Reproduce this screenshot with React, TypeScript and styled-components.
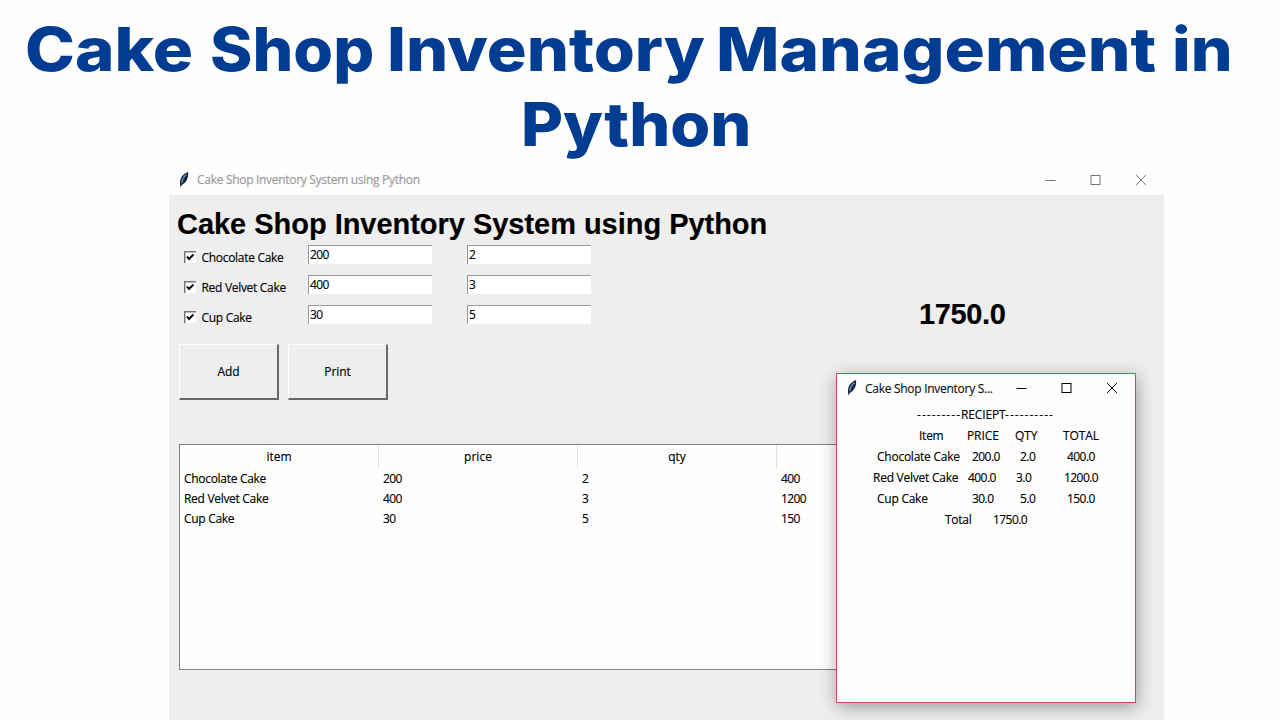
import React from 'react';
import styled, { createGlobalStyle } from 'styled-components';

const ui = `'Open Sans', 'Noto Sans', sans-serif`;

const GlobalStyle = createGlobalStyle`
  * { box-sizing: border-box; }
  body { margin: 0; background: #fefefe; overflow: hidden; }
`;

const Page = styled.main`
  width: 1280px;
  height: 720px;
  display: flex;
  flex-direction: column;
  overflow: hidden;
  font-family: ${ui};
  color: #000;
`;

const Banner = styled.h1`
  margin: 0;
  height: 165px;
  padding-top: 12px;
  font: 800 60px/75px Inter, sans-serif;
  color: #003d92;
`;

const BannerLine = styled.div<{ $indent: number }>`
  display: flex;
  padding-left: ${p => p.$indent}px;
  height: 75px;
`;

const Word = styled.span<{ $width: number; $stretch: number }>`
  display: block;
  flex: none;
  width: ${p => p.$width}px;
  white-space: nowrap;
  transform: scaleX(${p => p.$stretch});
  transform-origin: 0 50%;
`;

const AppWindow = styled.section`
  width: 995px;
  height: 555px;
  margin-left: 169px;
  position: relative;
  -webkit-text-stroke: 0.15px currentColor;
`;

const TitleBar = styled.header<{ $popup?: boolean }>`
  display: flex;
  align-items: center;
  height: ${p => (p.$popup ? 29 : 30)}px;
  padding-left: 9px;
  padding-bottom: 1px;
  background: #fefefe;
  color: ${p => (p.$popup ? '#111' : '#999')};
  font-size: 12px;
`;

const TitleText = styled.span<{ $spacing: number }>`
  flex: 1;
  margin-left: 7px;
  white-space: nowrap;
  letter-spacing: ${p => p.$spacing}px;
`;

const Controls = styled.div`
  display: flex;
  gap: 33px;
  padding-right: 17px;
  svg { display: block; }
`;

const Body = styled.div`
  height: 525px;
  background: #eee;
  padding: 12px 0 0 10px;
`;

const Heading = styled.h2`
  margin: 0 0 0 -2px;
  font: bold 29px/35px 'Liberation Sans', Arial, sans-serif;
  letter-spacing: -0.03px;
  white-space: nowrap;
`;

const Form = styled.div`
  display: flex;
  height: 90px;
  margin-top: 3px;
`;

const Fields = styled.div`
  width: 740px;
`;

const FieldRow = styled.div`
  display: flex;
  height: 30px;
`;

const CheckLabel = styled.label`
  display: flex;
  align-items: center;
  width: 129px;
  height: 25px;
  padding-left: 5px;
  gap: 6px;
  font-size: 12px;
  letter-spacing: -0.3px;
  white-space: nowrap;
  svg { margin: 0 -0.5px 2px 0; }
`;

const Entry = styled.div`
  width: 124px;
  height: 19px;
  margin-right: 35px;
  padding-left: 1px;
  background: #fff;
  border-top: 1px solid #999;
  border-left: 1px solid #999;
  font-size: 12px;
  line-height: 17px;
  letter-spacing: -0.6px;
`;

const Sum = styled.div`
  font: bold 29px/33px 'Liberation Sans', Arial, sans-serif;
  letter-spacing: -0.35px;
  margin-top: 53px;
`;

const Buttons = styled.div`
  display: flex;
  gap: 9px;
  margin-top: 9px;
`;

const Button = styled.button`
  width: 100px;
  height: 56px;
  padding: 0;
  background: #eee;
  border: solid;
  border-width: 1px 2px 2px 1px;
  border-color: #fff #696969 #696969 #fff;
  font: 12px ${ui};
  letter-spacing: -0.1px;
  color: #000;
`;

const Table = styled.div`
  width: 798px;
  height: 226px;
  margin-top: 44px;
  overflow: hidden;
  background: #fefefe;
  border: 1px solid #7c8087;
  font-size: 12px;
`;

const TableRow = styled.div<{ $head?: boolean }>`
  display: grid;
  grid-template-columns: repeat(4, 199px);
  height: ${p => (p.$head ? 24 : 20)}px;
  line-height: ${p => (p.$head ? 24 : 20)}px;
`;

const HeadCell = styled.div`
  text-align: center;
  border-right: 1px solid #e2e2e2;
`;

const Cell = styled.div<{ $text?: boolean }>`
  padding-left: 4px;
  letter-spacing: ${p => (p.$text ? -0.3 : -0.6)}px;
`;

const Popup = styled.section`
  position: absolute;
  left: 667px;
  top: 208px;
  width: 300px;
  height: 330px;
  background: #fefefe;
  border: 1px solid #c4505f;
  box-shadow: 1px 4px 16px rgba(0, 0, 0, 0.36);
`;

const Receipt = styled.div`
  padding-top: 1px;
  font-size: 12px;
`;

const ReceiptRow = styled.div<{ $indent: number; $cols: string }>`
  display: grid;
  grid-template-columns: ${p => p.$cols};
  padding-left: ${p => p.$indent}px;
  height: 21px;
  line-height: 21px;
  white-space: nowrap;
`;

const ReceiptCell = styled.span<{ $spacing: number }>`
  letter-spacing: ${p => p.$spacing}px;
`;

const Feather = () => (
  <svg width="12" height="18" viewBox="0 0 12 18">
    <path d="M10 1C6 2.500 1.500 6.500 2 12.500L2.300 16.500L3.800 14C7.800 12 11 7 10 1Z" fill="#14243c" />
    <path d="M8.500 3.500C5.500 6 4 8.500 3.800 12" stroke="#5c8cc4" strokeWidth="1.600" fill="none" />
  </svg>
);

const WindowControls = ({ color }: { color: string }) => (
  <Controls>
    <svg width="12" height="12" stroke={color}><path d="M0.500 6.500H10.500" /></svg>
    <svg width="12" height="12" stroke={color} fill="none"><rect x="1" y="1.500" width="9" height="9" /></svg>
    <svg width="12" height="12" stroke={color}><path d="M1 1L11 11M11 1L1 11" /></svg>
  </Controls>
);

const CheckBox = () => (
  <svg width="12" height="12" viewBox="0 0 12 12">
    <rect width="12" height="12" fill="#fff" />
    <path d="M0.750 12V0.750H12" stroke="#777" strokeWidth="1.500" fill="none" />
    <path d="M3 5.500L5 8L9.500 3.500" stroke="#000" strokeWidth="2" fill="none" />
  </svg>
);

const items = [
  { name: 'Chocolate Cake', price: '200', qty: '2', total: '400' },
  { name: 'Red Velvet Cake', price: '400', qty: '3', total: '1200' },
  { name: 'Cup Cake', price: '30', qty: '5', total: '150' },
];

const receipt = [
  { indent: 82, cols: '48px 48px 48px auto', cells: ['Item', 'PRICE', 'QTY', 'TOTAL'] },
  { indent: 40, cols: '95px 48px 47px auto', cells: ['Chocolate Cake', '200.0', '2.0', '400.0'] },
  { indent: 36, cols: '95px 48px 48px auto', cells: ['Red Velvet Cake', '400.0', '3.0', '1200.0'] },
  { indent: 40, cols: '95px 48px 47px auto', cells: ['Cup Cake', '30.0', '5.0', '150.0'] },
  { indent: 108, cols: '48px auto', cells: ['Total', '1750.0'] },
];

const spacingFor = (text: string) => {
  if (/\d/.test(text)) return -0.55;
  return text === text.toUpperCase() ? -0.1 : -0.25;
};

export default function App() {
  return (
    <Page>
      <GlobalStyle />
      <Banner>
        <BannerLine $indent={25}>
          <Word $width={185} $stretch={1.12}>Cake</Word>
          <Word $width={177} $stretch={1.072}>Shop</Word>
          <Word $width={329} $stretch={1.108}>Inventory</Word>
          <Word $width={456} $stretch={1.122}>Management</Word>
          <Word $width={60} $stretch={1.1}>in</Word>
        </BannerLine>
        <BannerLine $indent={521}>
          <Word $width={230} $stretch={1.077}>Python</Word>
        </BannerLine>
      </Banner>
      <AppWindow>
        <TitleBar>
          <Feather />
          <TitleText $spacing={-0.3}>Cake Shop Inventory System using Python</TitleText>
          <WindowControls color="#777" />
        </TitleBar>
        <Body>
          <Heading>Cake Shop Inventory System using Python</Heading>
          <Form>
            <Fields>
              {items.map(i => (
                <FieldRow key={i.name}>
                  <CheckLabel><CheckBox />{i.name}</CheckLabel>
                  <Entry>{i.price}</Entry>
                  <Entry>{i.qty}</Entry>
                </FieldRow>
              ))}
            </Fields>
            <Sum>1750.0</Sum>
          </Form>
          <Buttons>
            <Button>Add</Button>
            <Button>Print</Button>
          </Buttons>
          <Table>
            <TableRow $head>
              <HeadCell>item</HeadCell>
              <HeadCell>price</HeadCell>
              <HeadCell>qty</HeadCell>
            </TableRow>
            {items.map(i => (
              <TableRow key={i.name}>
                <Cell $text>{i.name}</Cell>
                <Cell>{i.price}</Cell>
                <Cell>{i.qty}</Cell>
                <Cell>{i.total}</Cell>
              </TableRow>
            ))}
          </Table>
        </Body>
        <Popup>
          <TitleBar $popup>
            <Feather />
            <TitleText $spacing={-0.28}>Cake Shop Inventory S...</TitleText>
            <WindowControls color="#000" />
          </TitleBar>
          <Receipt>
            <ReceiptRow $indent={80} $cols="44px 44px auto">
              <ReceiptCell $spacing={1.03}>---------</ReceiptCell>
              <ReceiptCell $spacing={-0.15}>RECIEPT</ReceiptCell>
              <ReceiptCell $spacing={1.03}>----------</ReceiptCell>
            </ReceiptRow>
            {receipt.map(r => (
              <ReceiptRow key={r.cells[0]} $indent={r.indent} $cols={r.cols}>
                {r.cells.map(c => <ReceiptCell key={c} $spacing={spacingFor(c)}>{c}</ReceiptCell>)}
              </ReceiptRow>
            ))}
          </Receipt>
        </Popup>
      </AppWindow>
    </Page>
  );
}
